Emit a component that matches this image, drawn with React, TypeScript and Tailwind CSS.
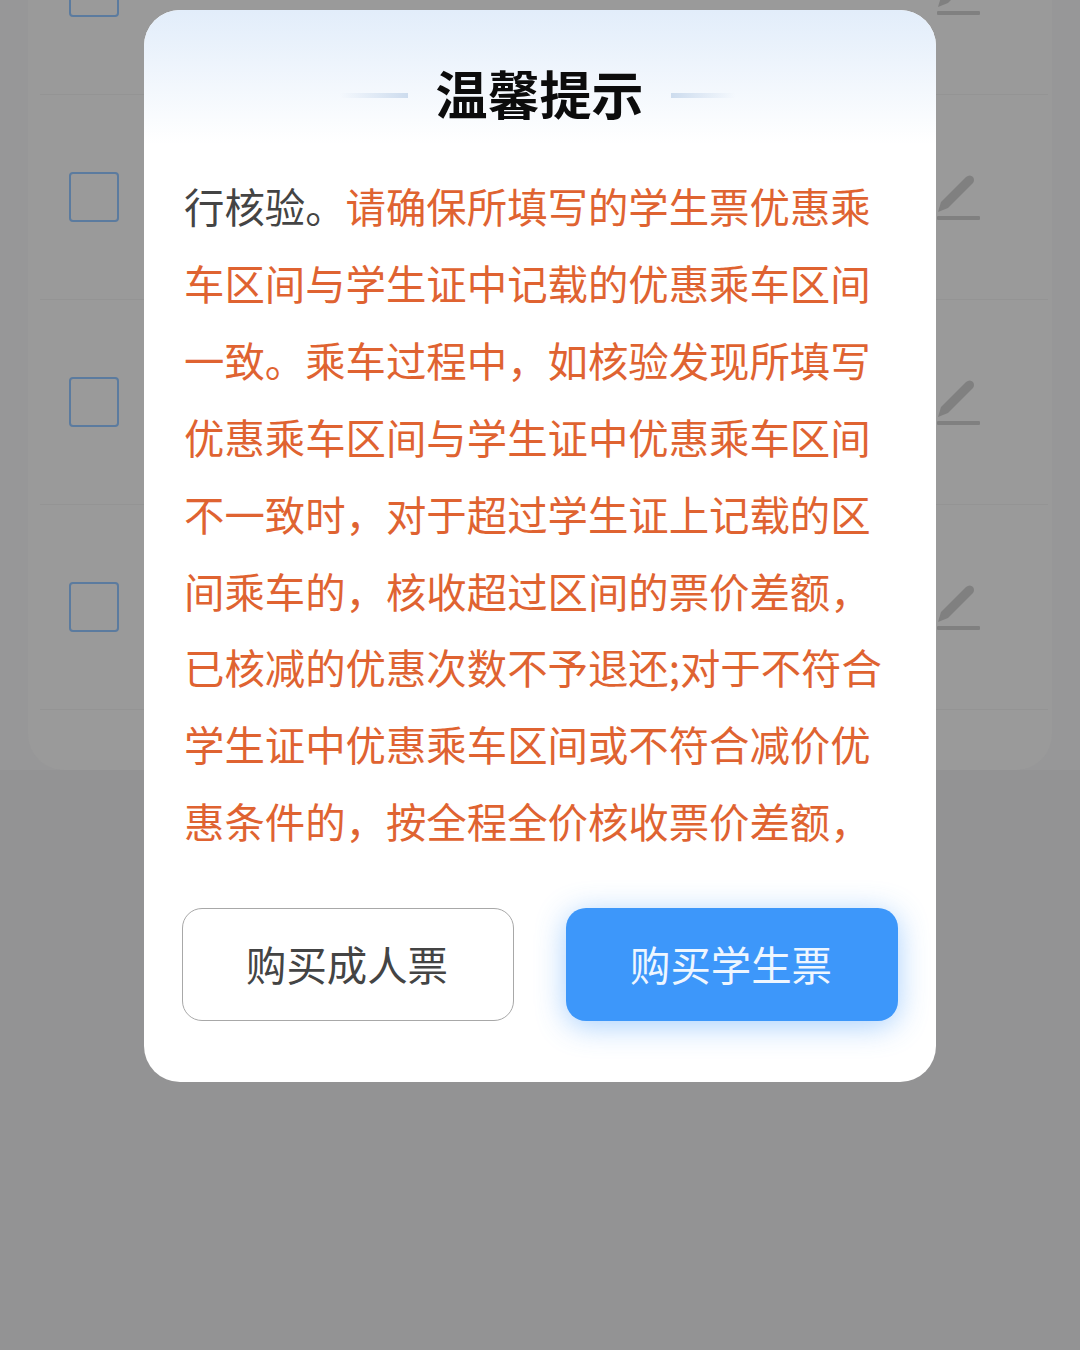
const cjk = "font-['Noto_Sans_CJK_SC','Noto_Sans',sans-serif]"

const lines = [
  "车区间与学生证中记载的优惠乘车区间",
  "一致。乘车过程中，如核验发现所填写",
  "优惠乘车区间与学生证中优惠乘车区间",
  "不一致时，对于超过学生证上记载的区",
  "间乘车的，核收超过区间的票价差额，",
  "已核减的优惠次数不予退还;对于不符合",
  "学生证中优惠乘车区间或不符合减价优",
  "惠条件的，按全程全价核收票价差额，",
  "并核减相应的优惠乘车次数不予退还。",
]

function Pencil() {
  return (
    <svg width="43" height="45" viewBox="0 0 43 45" fill="#808080">
      <path d="M1 37 L4 27 L29 2 Q33 -1 36 2 Q38 5 36 8 L11 33 Z" />
      <rect x="0" y="41" width="43" height="4" rx="1" />
    </svg>
  )
}

function Row() {
  return (
    <div className="flex h-[205px] items-center justify-between border-b border-[#949494] pl-[29px] pr-[68px]">
      <div className="h-[50px] w-[50px] rounded-[4px] border-2 border-[#5b7b9f]" />
      <Pencil />
    </div>
  )
}

export default function App() {
  return (
    <div className={`relative h-[1350px] w-[1080px] overflow-hidden bg-[#939394] ${cjk}`}>
      {/* page behind the dialog */}
      <div className="h-[770px] bg-[#979798] px-[28px]">
        <div className="h-full rounded-b-[36px] bg-[#9a9a9a] pl-[12px] pr-[4px] pt-[1px]">
          <div className="-mt-[111px]">
            <Row />
            <Row />
            <Row />
            <Row />
          </div>
        </div>
      </div>

      {/* dialog */}
      <div className="absolute left-[144px] top-[10px] flex h-[1072px] w-[792px] flex-col overflow-hidden rounded-[36px] bg-white">
        <div className="flex h-[134px] shrink-0 items-center justify-center gap-[27px] bg-gradient-to-b from-[#e2edfa] to-white pr-[5px] pt-[32px]">
          <div className="mt-[4px] h-[5px] w-[68px] bg-gradient-to-r from-transparent to-[#cddcee]" />
          <h1 className="text-[52px] font-bold leading-[60px] text-[#0c0c0c]">温馨提示</h1>
          <div className="mt-[4px] h-[5px] w-[64px] bg-gradient-to-r from-[#cddcee] to-transparent" />
        </div>

        <div className="relative h-[736px] shrink-0 overflow-hidden whitespace-nowrap pl-[40px] pt-[24px] text-[40.4px] leading-[76.9px] text-[#df6331]">
          <div>
            <span className="text-[#444444]">行核验。</span>请确保所填写的学生票优惠乘
          </div>
          {lines.map((line) => (
            <div key={line}>{line}</div>
          ))}
          {/* fade at the bottom of the scrolling text */}
          <div className="absolute inset-x-0 bottom-0 h-[8px] bg-gradient-to-b from-white/80 to-white" />
        </div>

        <div className="flex justify-between px-[38px] pt-[28px]">
          <button className="h-[113px] w-[332px] rounded-[20px] border border-[#a8a8a8] bg-white pr-[2px] text-[40.4px] text-[#444444]">
            购买成人票
          </button>
          <button className="h-[113px] w-[332px] rounded-[20px] bg-[#3d97fa] pr-[2px] text-[40.4px] text-[#eef6ff] shadow-[0_5px_30px_rgba(61,151,250,0.45)]">
            购买学生票
          </button>
        </div>
      </div>
    </div>
  )
}
